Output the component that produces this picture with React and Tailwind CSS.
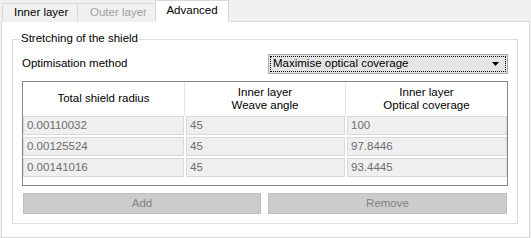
import React from 'react';

const rows = [
    ['0.00110032', '45', '100'],
    ['0.00125524', '45', '97.8446'],
    ['0.00141016', '45', '93.4445'],
];

const App = () => {
    return (
        <div
            className="w-[531px] h-[238px] bg-[#f0f0f0] overflow-hidden text-[11.5px] leading-none text-black"
            style={{ fontFamily: '"Liberation Sans", Arial, sans-serif' }}
        >
            {/* Tab bar */}
            <div className="flex items-end h-[22px] pl-[2px] relative z-10">
                <div className="w-[76px] h-[19px] border border-b-0 border-[#d9d9d9] bg-[#f0f0f0] flex items-center pl-[11px]">
                    Inner layer
                </div>
                <div className="w-[78px] h-[19px] border-t border-r border-[#d9d9d9] bg-[#f0f0f0] flex items-center pl-[12px] text-[#a0a0a0]">
                    Outer layer
                </div>
                <div className="w-[74px] h-[22px] -ml-px border border-b-0 border-[#d9d9d9] bg-white flex items-center justify-center pb-[2px]">
                    Advanced
                </div>
            </div>

            {/* Pane */}
            <div className="ml-[1px] -mt-px w-[529px] h-[217px] border border-[#d9d9d9] bg-white pt-[17px] pl-[10px]">
                {/* Group box */}
                <div className="relative w-[506px] h-[185px] border border-[#dcdcdc]">
                    <div className="absolute left-[7px] -top-[7px] bg-white px-[1px]">Stretching of the shield</div>

                    <div className="flex items-center h-[20px] mt-[14px] pl-[9px]">
                        <div className="w-[246px]">Optimisation method</div>
                        <div className="w-[240px] h-[20px] border border-[#acacac] bg-[#e5e5e5] p-[1px]">
                            <div className="h-full border border-dotted border-black flex items-center pl-[2px] pr-[6px]">
                                <span className="flex-1">Maximise optical coverage</span>
                                <svg width="7" height="4" viewBox="0 0 7 4">
                                    <path d="M0 0h7L3.5 4z" fill="#000" />
                                </svg>
                            </div>
                        </div>
                    </div>

                    {/* Table */}
                    <div className="ml-[9px] mt-[7px] w-[486px] h-[105px] border border-[#828790] bg-white">
                        <div className="grid grid-cols-[162px_161px_161px] h-[34px]">
                            <div className="border-r border-[#e5e5e5] flex items-center justify-center">Total shield radius</div>
                            <div className="border-r border-[#e5e5e5] flex flex-col items-center justify-center leading-[13px]">
                                <span>Inner layer</span>
                                <span>Weave angle</span>
                            </div>
                            <div className="flex flex-col items-center justify-center leading-[13px]">
                                <span>Inner layer</span>
                                <span>Optical coverage</span>
                            </div>
                        </div>
                        <div className="flex flex-col gap-[2px]">
                            {rows.map((r, i) => (
                                <div key={i} className="grid grid-cols-[161px_159px_160px] gap-[2px]">
                                    {r.map((c, j) => (
                                        <div key={j} className="h-[19px] border border-[#d9d9d9] bg-[#efefef] text-[#6d6d6d] flex items-center pl-[3px]">
                                            {c}
                                        </div>
                                    ))}
                                </div>
                            ))}
                        </div>
                    </div>

                    {/* Buttons */}
                    <div className="flex gap-[7px] pl-[10px] mt-[7px]">
                        <div className="w-[238px] h-[21px] border border-[#bfbfbf] bg-[#cccccc] text-[#838383] flex items-center justify-center">Add</div>
                        <div className="w-[239px] h-[21px] border border-[#bfbfbf] bg-[#cccccc] text-[#838383] flex items-center justify-center">Remove</div>
                    </div>
                </div>
            </div>
        </div>
    );
};

export default App;
